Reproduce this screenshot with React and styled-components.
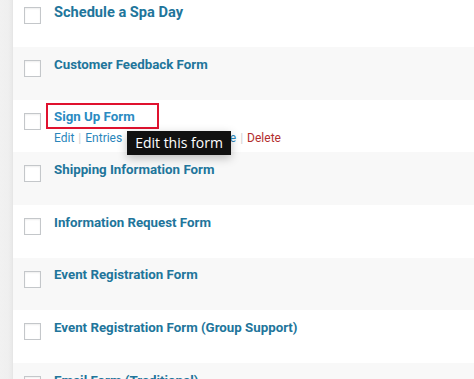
import React from "react";
import styled, { createGlobalStyle } from "styled-components";

const Global = createGlobalStyle`
  html, body { margin: 0; padding: 0; background: #ffffff; overflow: hidden; }
  body { font-family: Roboto, "Liberation Sans", sans-serif; }
`;

const Page = styled.div`
  display: flex;
  width: 474px;
  height: 379px;
  overflow: hidden;
`;

const Strip = styled.div`
  flex: 0 0 12px;
  background: linear-gradient(to right, #f1f1f1 0%, #efefef 70%, #e9e9e9 100%);
  border-right: 1px solid #e6e6e6;
`;

const Table = styled.div`
  flex: 1;
  display: flex;
  flex-direction: column;
  margin-top: -5.7px;
`;

const Row = styled.div`
  flex: 0 0 52.67px;
  height: 52.67px;
  box-sizing: border-box;
  display: flex;
  align-items: flex-start;
  padding: 7.7px 0 0 11px;
  background: ${(p) => (p.$alt ? "#f8f8f8" : "#ffffff")};
`;

const Check = styled.span`
  flex: 0 0 auto;
  width: 15px;
  height: 15px;
  margin-top: 5.3px;
  border: 1px solid #c4c7ca;
  background: #fff;
  box-shadow: inset 0 1px 2px rgba(0, 0, 0, 0.07);
`;

const Cell = styled.div`
  margin-left: 13px;
  display: flex;
  flex-direction: column;
`;

const TitleWrap = styled.div`
  position: relative;
  align-self: flex-start;
`;

const Title = styled.a`
  display: block;
  font-family: Roboto, "Liberation Sans", sans-serif;
  font-weight: 700;
  font-size: ${(p) => p.$size || 13.3}px;
  line-height: 20px;
  color: ${(p) => (p.$hover ? "#2a8bc2" : "#21759b")};
  text-decoration: none;
  white-space: nowrap;
`;

const Highlight = styled.span`
  position: absolute;
  left: -8.5px;
  top: -4px;
  width: 113px;
  height: 25.5px;
  box-sizing: border-box;
  border: 2.5px solid #e0122f;
`;

const Actions = styled.div`
  position: relative;
  margin-top: 2px;
  display: flex;
  align-items: center;
  font-size: 12px;
  line-height: 18px;
  white-space: nowrap;
`;

const Action = styled.a`
  color: ${(p) => (p.$danger ? "#b32d2e" : "#2a86bb")};
  text-decoration: none;
`;

const Sep = styled.span`
  color: #d0d0d0;
  margin: 0 4px;
`;

const Tooltip = styled.div`
  position: absolute;
  left: 73px;
  top: 2px;
  height: 24px;
  width: 104px;
  box-sizing: border-box;
  display: flex;
  align-items: center;
  justify-content: center;
  background: #111111;
  color: #ffffff;
  font-family: "Open Sans", "Noto Sans", sans-serif;
  font-size: 14px;
  box-shadow: 0 3px 10px rgba(0, 0, 0, 0.25);
`;

const forms = [
  { name: "Schedule a Spa Day", size: 14.6 },
  { name: "Customer Feedback Form" },
  { name: "Sign Up Form" },
  { name: "Shipping Information Form" },
  { name: "Information Request Form" },
  { name: "Event Registration Form" },
  { name: "Event Registration Form (Group Support)" },
  { name: "Email Form (Traditional)" },
];

export default function App() {
  return (
    <>
      <Global />
      <Page>
        <Strip />
        <Table>
          {forms.map(({ name, size }, i) => {
            const active = i === 2;
            return (
              <Row key={name} $alt={i % 2 === 1}>
                <Check />
                <Cell>
                  <TitleWrap>
                    <Title $hover={active} $size={size}>
                      {name}
                    </Title>
                    {active && <Highlight />}
                  </TitleWrap>
                  {active && (
                    <Actions>
                      <Action>Edit</Action>
                      <Sep>|</Sep>
                      <Action>Entries</Action>
                      <Sep>|</Sep>
                      <Action>Preview</Action>
                      <Sep>|</Sep>
                      <Action>Duplicate</Action>
                      <Sep>|</Sep>
                      <Action $danger>Delete</Action>
                      <Tooltip>Edit this form</Tooltip>
                    </Actions>
                  )}
                </Cell>
              </Row>
            );
          })}
        </Table>
      </Page>
    </>
  );
}
